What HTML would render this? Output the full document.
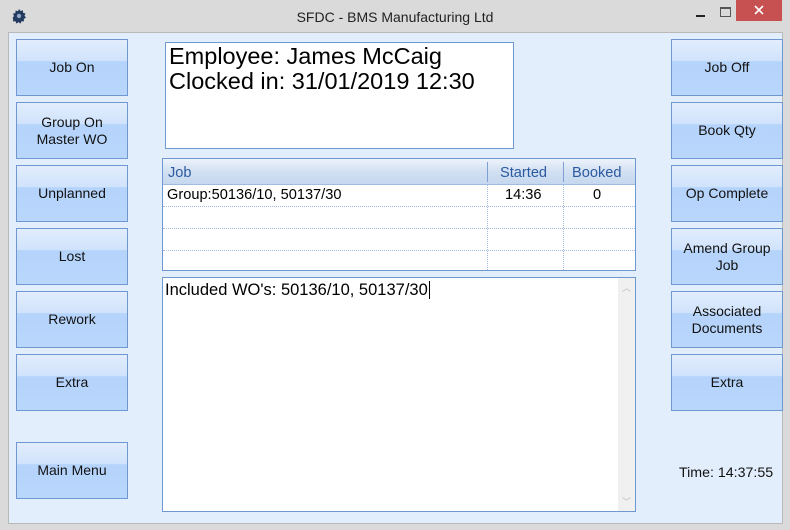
<!DOCTYPE html><html><head><style>
body{margin:0;width:790px;height:530px;background:#dadada;font-family:"Liberation Sans",sans-serif;position:relative;overflow:hidden}
.a{position:absolute}
.title{left:0;top:0;width:790px;height:32px;text-align:center;line-height:34px;font-size:14px;color:#222}
.body{left:8px;top:32px;width:773px;height:490px;background:#e3eefd;border:1px solid #b9b9b9}
.btn{position:absolute;width:110px;height:55px;border:1px solid #6f98d0;background:linear-gradient(#e2edfd 0,#d0e3fc 38%,#b5d4fb 39%,#b9d6fc 100%);display:flex;align-items:center;justify-content:center;text-align:center;font-size:14px;color:#111;line-height:17px}
.cell{position:absolute;font-size:14.6px}
</style></head><body>
<div class="a title">SFDC - BMS Manufacturing Ltd</div>
<svg class="a" style="left:11px;top:8px" width="16" height="16" viewBox="0 0 16 16"><path d="M8 1l1.5 2 2.4-.8.2 2.5 2.4.8-1 2.2 1.5 2-2.2 1.2.2 2.5-2.5-.1-1 2.3-2-1.5-2 1.5-1-2.3-2.5.1.2-2.5L1.5 10 3 8 2 5.8l2.4-.8.2-2.5 2.4.8z" fill="#223a5e"/><circle cx="8" cy="8" r="2.2" fill="#8fa6c6"/></svg>
<div class="a" style="left:696px;top:15px;width:9px;height:2px;background:#222"></div>
<div class="a" style="left:720px;top:7px;width:9px;height:7px;border:1px solid #555;border-top-width:2px"></div>
<div class="a" style="left:736px;top:0;width:46px;height:21px;background:#c75050"></div>
<svg class="a" style="left:736px;top:0" width="46" height="21"><path d="M19 6l8 8M27 6l-8 8" stroke="#fff" stroke-width="1.6"/></svg>
<div class="a body"></div>
<div class="btn" style="left:16px;top:39px">Job On</div>
<div class="btn" style="left:16px;top:102px">Group On<br>Master WO</div>
<div class="btn" style="left:16px;top:165px">Unplanned</div>
<div class="btn" style="left:16px;top:228px">Lost</div>
<div class="btn" style="left:16px;top:291px">Rework</div>
<div class="btn" style="left:16px;top:354px">Extra</div>
<div class="btn" style="left:16px;top:442px">Main Menu</div>
<div class="btn" style="left:671px;top:39px">Job Off</div>
<div class="btn" style="left:671px;top:102px">Book Qty</div>
<div class="btn" style="left:671px;top:165px">Op Complete</div>
<div class="btn" style="left:671px;top:228px">Amend Group<br>Job</div>
<div class="btn" style="left:671px;top:291px">Associated<br>Documents</div>
<div class="btn" style="left:671px;top:354px">Extra</div>
<div class="a" style="left:165px;top:42px;width:349px;height:107px;background:#fff;border:1px solid #6f98d0;font-size:23.5px;line-height:25px;padding-left:3px;box-sizing:border-box;padding-top:1px;white-space:nowrap">Employee: James McCaig<br>Clocked in: 31/01/2019 12:30</div>
<div class="a" style="left:162px;top:158px;width:472px;height:111px;background:#fff;border:1px solid #6f98d0">
<div class="a" style="left:0;top:0;width:472px;height:25px;background:linear-gradient(#edf3fb,#d2e0f2 50%,#c6d8ef);border-bottom:1px solid #9fbbe0"></div>
<div class="a" style="left:324px;top:3px;height:20px;border-left:1px solid #7d9fd4"></div>
<div class="a" style="left:400px;top:3px;height:20px;border-left:1px solid #7d9fd4"></div>
<div class="cell" style="left:5px;top:6px;color:#2c5aa0">Job</div>
<div class="cell" style="left:337px;top:6px;color:#2c5aa0">Started</div>
<div class="cell" style="left:409px;top:6px;color:#2c5aa0">Booked</div>
<div class="a" style="left:324px;top:26px;height:85px;border-left:1px dotted #9fbbe0"></div>
<div class="a" style="left:400px;top:26px;height:85px;border-left:1px dotted #9fbbe0"></div>
<div class="a" style="left:0;top:47px;width:472px;border-top:1px dotted #9fbbe0"></div>
<div class="a" style="left:0;top:69px;width:472px;border-top:1px dotted #9fbbe0"></div>
<div class="a" style="left:0;top:91px;width:472px;border-top:1px dotted #9fbbe0"></div>
<div class="cell" style="left:4px;top:28px">Group:50136/10, 50137/30</div>
<div class="cell" style="left:342px;top:28px">14:36</div>
<div class="cell" style="left:430px;top:28px">0</div>
</div>
<div class="a" style="left:162px;top:277px;width:472px;height:233px;background:#fff;border:1px solid #6f98d0">
<div class="a" style="left:2px;top:3px;font-size:16.5px">Included WO's: 50136/10, 50137/30<span style="border-left:1px solid #000;margin-left:1px"></span></div>
<div class="a" style="right:0;top:0;width:17px;height:233px;background:#f0f0f0;color:#bbb;font-size:9px;text-align:center">
<div style="margin-top:3px">︿</div><div style="position:absolute;bottom:3px;width:17px">﹀</div></div>
</div>
<div class="a" style="left:679px;top:465px;font-size:14.2px;color:#111">Time: 14:37:55</div>
</body></html>
